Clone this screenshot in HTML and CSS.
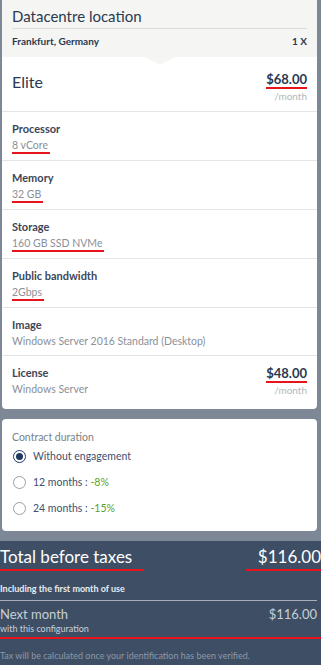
FILE: index.html
```html
<!DOCTYPE html>
<html lang="en">
<head>
    <meta charset="UTF-8">
    <title>Order summary</title>
    <link rel="stylesheet" href="styles.css">
</head>
<body>
    <div class="wrap">
        <div class="card">
            <div class="dc">
                <div class="dc-title">Datacentre location</div>
                <div class="dc-row">
                    <span>Frankfurt, Germany</span>
                    <span>1 X</span>
                </div>
            </div>
            <div class="plan">
                <div class="plan-name">Elite</div>
                <div class="price">
                    <span class="amount"><span class="mark m-price">$68.00</span></span>
                    <span class="per">/month</span>
                </div>
            </div>
            <div class="spec">
                <div class="label">Processor</div>
                <div class="value"><span class="mark m-cpu">8 vCore</span></div>
            </div>
            <div class="spec">
                <div class="label">Memory</div>
                <div class="value"><span class="mark m-mem">32 GB</span></div>
            </div>
            <div class="spec">
                <div class="label">Storage</div>
                <div class="value"><span class="mark m-disk">160 GB SSD NVMe</span></div>
            </div>
            <div class="spec">
                <div class="label">Public bandwidth</div>
                <div class="value"><span class="mark m-bw">2Gbps</span></div>
            </div>
            <div class="spec">
                <div class="label">Image</div>
                <div class="value">Windows Server 2016 Standard (Desktop)</div>
            </div>
            <div class="spec spec-price">
                <div>
                    <div class="label">License</div>
                    <div class="value">Windows Server</div>
                </div>
                <div class="price">
                    <span class="amount"><span class="mark m-price">$48.00</span></span>
                    <span class="per">/month</span>
                </div>
            </div>
        </div>

        <div class="card contract">
            <div class="contract-title">Contract duration</div>
            <label class="opt">
                <span class="radio checked"></span>
                <span>Without engagement</span>
            </label>
            <label class="opt">
                <span class="radio"></span>
                <span>12 months : <em>-8%</em></span>
            </label>
            <label class="opt">
                <span class="radio"></span>
                <span>24 months : <em>-15%</em></span>
            </label>
        </div>
    </div>

    <div class="total">
        <div class="total-row">
            <span class="mark m-total">Total before taxes</span>
            <span class="mark m-sum">$116.00</span>
        </div>
        <div class="first">Including the first month of use</div>
        <div class="next">
            <div class="next-row">
                <span>Next month</span>
                <span>$116.00</span>
            </div>
            <div class="next-sub">with this configuration</div>
        </div>
        <div class="tax">Tax will be calculated once your identification has been verified.</div>
    </div>
</body>
</html>
```

FILE: styles.css
```css
body {
    margin: 0;
    background: #7e8796;
    font-family: Lato, "Noto Sans", sans-serif;
    color: #2a3950;
}
.wrap {
    padding: 0 4px 0 2px;
}
.card {
    background: #fff;
    border-radius: 0 0 4px 4px;
    overflow: hidden;
}
/* datacentre */
.dc {
    background: #f5f5f3;
    padding: 6px 10px 0;
    height: 51px;
    position: relative;
}
.dc::after {
    content: "";
    position: absolute;
    left: 143px;
    bottom: -8px;
    border-left: 15px solid transparent;
    border-right: 15px solid transparent;
    border-top: 8px solid #f5f5f3;
}
.dc-title {
    font-size: 15px;
    line-height: 20px;
    padding-bottom: 2px;
    border-bottom: 1px solid #dadcdf;
}
.dc-row {
    display: flex;
    justify-content: space-between;
    font-size: 10px;
    font-weight: bold;
    line-height: 24px;
}
/* plan */
.plan {
    display: flex;
    justify-content: space-between;
    align-items: flex-start;
    padding: 14px 10px 0;
    height: 40px;
}
.plan-name {
    font-size: 16px;
    line-height: 20px;
    padding-top: 1px;
}
.price {
    display: flex;
    flex-direction: column;
    align-items: flex-end;
}
.amount {
    font-size: 13px;
    font-weight: bold;
    line-height: 16px;
}
.per {
    font-size: 10px;
    color: #b3b7bd;
    line-height: 14px;
}
/* spec rows */
.spec {
    border-top: 1px solid #e3e5e8;
    padding: 9px 10px 6px;
}
.label {
    font-size: 11px;
    font-weight: bold;
    color: #3c4657;
    line-height: 16px;
}
.value {
    font-size: 10.5px;
    color: #8c9099;
    line-height: 16px;
}
.spec-price {
    display: flex;
    justify-content: space-between;
    padding-bottom: 12px;
}
/* red marks */
.mark {
    display: inline-block;
    border-bottom: 2px solid #e8141b;
}
.m-price {
    line-height: 14px;
    padding: 0 0 1px;
}
.m-cpu, .m-mem, .m-disk, .m-bw {
    line-height: 14px;
    padding-right: 2px;
}
/* contract */
.contract {
    margin-top: 10px;
    border-radius: 4px;
    padding: 12px 10px 10px;
}
.contract-title {
    font-size: 10.5px;
    color: #7a7f88;
    line-height: 12px;
}
.opt {
    display: flex;
    align-items: center;
    gap: 7px;
    font-size: 10.5px;
    color: #3c5070;
    height: 26px;
}
.opt em {
    font-style: normal;
    color: #59a22a;
}
.radio {
    width: 11px;
    height: 11px;
    border: 1px solid #9a9ea5;
    border-radius: 50%;
    position: relative;
    margin-left: 1px;
}
.radio.checked {
    border: 1px solid #1e3a64;
}
.radio.checked::after {
    content: "";
    position: absolute;
    left: 2px;
    top: 2px;
    width: 7px;
    height: 7px;
    border-radius: 50%;
    background: #1e3a64;
}
/* total */
.total {
    margin-top: 10px;
    background: #3e4f65;
    color: #fff;
    padding: 6px 0 6px;
}
.total-row {
    display: flex;
    justify-content: space-between;
    align-items: flex-start;
    font-size: 17px;
    line-height: 20px;
    padding-right: 4px;
}
.m-total {
    padding: 0 12px 2px 0;
}
.m-sum {
    padding: 0 0 2px 12px;
    margin-right: -4px;
}
.first {
    font-size: 9px;
    font-weight: bold;
    color: #e9ecf0;
    margin-top: 11px;
    line-height: 14px;
    padding-bottom: 4px;
    border-bottom: 1px solid #a7afba;
    margin-right: 4px;
}
.next {
    border-bottom: 2px solid #e8141b;
    padding-bottom: 2px;
}
.next-row {
    display: flex;
    justify-content: space-between;
    font-size: 13px;
    color: #c9ced6;
    line-height: 18px;
    padding: 4px 4px 0 0;
}
.next-sub {
    font-size: 9px;
    color: #c9ced6;
    line-height: 12px;
}
.tax {
    font-size: 9px;
    color: #8d97a5;
    line-height: 14px;
    margin-top: 10px;
}
```
